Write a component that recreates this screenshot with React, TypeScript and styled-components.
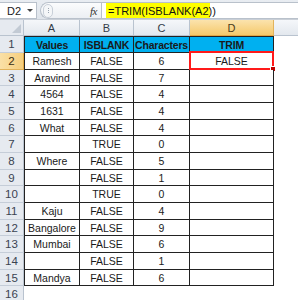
import React from "react";
import styled, { createGlobalStyle } from "styled-components";

const Global = createGlobalStyle`
  html, body { margin: 0; padding: 0; background: #ffffff; }
  body { width: 298px; height: 300px; overflow: hidden; font-family: "Liberation Sans", Arial, sans-serif; }
`;

const Page = styled.div`
  width: 298px;
  height: 300px;
  overflow: hidden;
  background: #ffffff;
`;

const FormulaBar = styled.div`
  display: flex;
  align-items: stretch;
  height: 20px;
  padding-top: 2px;
  box-sizing: border-box;
  background: linear-gradient(#e9edf2, #dfe4ea);
  border-bottom: 1px solid #c9cfd7;
`;

const NameBox = styled.div`
  width: 37px;
  box-sizing: border-box;
  background: #ffffff;
  border: 1px solid #b9c1cb;
  border-left: none;
  display: flex;
  align-items: center;
  justify-content: space-between;
  padding: 0 3px 0 7px;
  font-size: 11px;
  color: #1a1a1a;
`;

const Arrow = styled.span`
  width: 0;
  height: 0;
  border-left: 3px solid transparent;
  border-right: 3px solid transparent;
  border-top: 3px solid #444;
`;

const Tools = styled.div`
  margin-left: 3px;
  width: 61px;
  box-sizing: border-box;
  border: 1px solid #b9c1cb;
  border-right: none;
  border-radius: 9px 0 0 9px;
  background: linear-gradient(#fbfcfd, #eceff3);
  display: flex;
  align-items: center;
  justify-content: space-between;
  padding: 0 4px 0 2px;
`;

const Grip = styled.span`
  width: 8px;
  height: 12px;
  border-radius: 6px;
  border: 1px solid #c8cfd8;
  background: #f4f6f8;
  display: flex;
  align-items: center;
  justify-content: center;
  &::after {
    content: "";
    width: 1px;
    height: 6px;
    background: repeating-linear-gradient(#9aa4b0 0 1px, transparent 1px 2px);
  }
`;

const Fx = styled.span`
  font-family: "Liberation Serif", "Times New Roman", serif;
  font-style: italic;
  font-size: 11px;
  color: #333;
  letter-spacing: -0.5px;
`;

const FormulaInput = styled.div`
  flex: 1;
  background: #ffffff;
  border: 1px solid #b9c1cb;
  border-right: none;
  display: flex;
  align-items: stretch;
  padding-left: 4px;
`;

const Highlight = styled.span`
  background: #ffff00;
  padding: 0 2px 0 2px;
  display: flex;
  align-items: center;
  font-size: 11px;
  color: #111;
  width: 100px;
`;

const Sheet = styled.div`
  display: grid;
  grid-template-columns: 24px 56px 54px 56px 84px 1fr;
  grid-auto-rows: auto;
`;

const Corner = styled.div`
  height: 16px;
  box-sizing: border-box;
  background: #e6eaf0;
  border-right: 1px solid #b9c3cf;
  border-bottom: 1px solid #b9c3cf;
  position: relative;
  &::after {
    content: "";
    position: absolute;
    right: 2px;
    bottom: 2px;
    width: 0;
    height: 0;
    border-left: 9px solid transparent;
    border-bottom: 9px solid #c2cad4;
  }
`;

const ColHead = styled.div<{ $sel?: boolean; $blank?: boolean }>`
  height: 16px;
  box-sizing: border-box;
  display: flex;
  align-items: center;
  justify-content: center;
  font-size: 11px;
  color: ${(p) => (p.$sel ? "#4a3a1a" : "#333c48")};
  background: ${(p) =>
    p.$sel
      ? "linear-gradient(#fbe3ad, #f5c96c)"
      : "linear-gradient(#f5f7fa, #e3e8ee)"};
  border-right: 1px solid ${(p) => (p.$sel ? "#e2b35b" : "#b9c3cf")};
  border-bottom: 1px solid ${(p) => (p.$sel ? "#e2a845" : "#b9c3cf")};
  ${(p) => (p.$blank ? "border-right: none;" : "")}
`;

const RowHead = styled.div<{ $sel?: boolean; $h: number }>`
  height: ${(p) => p.$h}px;
  box-sizing: border-box;
  display: flex;
  align-items: center;
  justify-content: center;
  font-size: 11.5px;
  color: ${(p) => (p.$sel ? "#3a2e12" : "#3a4350")};
  background: ${(p) =>
    p.$sel ? "linear-gradient(90deg, #fae0a6, #f6cf7e)" : "#e6eaf0"};
  border-right: 1px solid ${(p) => (p.$sel ? "#e2a845" : "#b9c3cf")};
  border-bottom: 1px solid ${(p) => (p.$sel ? "#e2b35b" : "#c5cdd8")};
`;

const Cell = styled.div<{ $h: number; $head?: boolean; $first?: boolean; $top?: boolean; $plain?: boolean }>`
  position: relative;
  height: ${(p) => p.$h}px;
  box-sizing: border-box;
  display: flex;
  align-items: center;
  justify-content: center;
  white-space: nowrap;
  font-size: 10.5px;
  color: #1a1a1a;
  font-weight: ${(p) => (p.$head ? 700 : 400)};
  letter-spacing: ${(p) => (p.$head ? "-0.2px" : "0")};
  background: ${(p) => (p.$head ? "#00b0f0" : "#ffffff")};
  ${(p) =>
    p.$plain
      ? ""
      : `border-right: 1px solid #222; border-bottom: 1px solid #222;`}
  ${(p) => (p.$first && !p.$plain ? "border-left: 1px solid #222;" : "")}
  ${(p) => (p.$top ? "border-top: 1px solid #222;" : "")}
`;

const Filler = styled.div<{ $h: number }>`
  height: ${(p) => p.$h}px;
  background: #ffffff;
`;

const Selection = styled.div`
  position: absolute;
  left: -1px;
  top: -2px;
  right: -1px;
  bottom: -1px;
  border: 2px solid #ff1a1a;
  pointer-events: none;
  &::after {
    content: "";
    position: absolute;
    right: -4px;
    bottom: -4px;
    width: 4px;
    height: 4px;
    background: #c00000;
    border: 1px solid #ffffff;
  }
`;

type Row = [string, string, string, string];

const rows: Row[] = [
  ["Values", "ISBLANK", "Characters", "TRIM"],
  ["Ramesh", "FALSE", "6", "FALSE"],
  ["Aravind", "FALSE", "7", ""],
  ["4564", "FALSE", "4", ""],
  ["1631", "FALSE", "4", ""],
  ["What", "FALSE", "4", ""],
  ["", "TRUE", "0", ""],
  ["Where", "FALSE", "5", ""],
  ["", "FALSE", "1", ""],
  ["", "TRUE", "0", ""],
  ["Kaju", "FALSE", "4", ""],
  ["Bangalore", "FALSE", "9", ""],
  ["Mumbai", "FALSE", "6", ""],
  ["", "FALSE", "1", ""],
  ["Mandya", "FALSE", "6", ""],
];

const heightFor = (i: number) => (i % 3 === 2 ? 16 : 17);

export default function App() {
  return (
    <Page>
      <Global />
      <FormulaBar>
        <NameBox>
          D2
          <Arrow />
        </NameBox>
        <Tools>
          <Grip />
          <Fx>fx</Fx>
        </Tools>
        <FormulaInput>
          <Highlight>=TRIM(ISBLANK(A2))</Highlight>
        </FormulaInput>
      </FormulaBar>
      <Sheet>
        <Corner />
        <ColHead>A</ColHead>
        <ColHead>B</ColHead>
        <ColHead>C</ColHead>
        <ColHead $sel>D</ColHead>
        <ColHead $blank />
        {rows.map((r, i) => {
          const h = heightFor(i);
          const n = i + 1;
          return (
            <React.Fragment key={n}>
              <RowHead $h={h} $sel={n === 2}>
                {n}
              </RowHead>
              {r.map((v, j) => (
                <Cell key={j} $h={h} $head={i === 0} $first={j === 0} $top={i === 0}>
                  {v}
                  {n === 2 && j === 3 ? <Selection /> : null}
                </Cell>
              ))}
              <Filler $h={h} />
            </React.Fragment>
          );
        })}
        <RowHead $h={17}>16</RowHead>
        <Cell $h={17} $plain />
        <Cell $h={17} $plain />
        <Cell $h={17} $plain />
        <Cell $h={17} $plain />
        <Filler $h={17} />
      </Sheet>
    </Page>
  );
}
